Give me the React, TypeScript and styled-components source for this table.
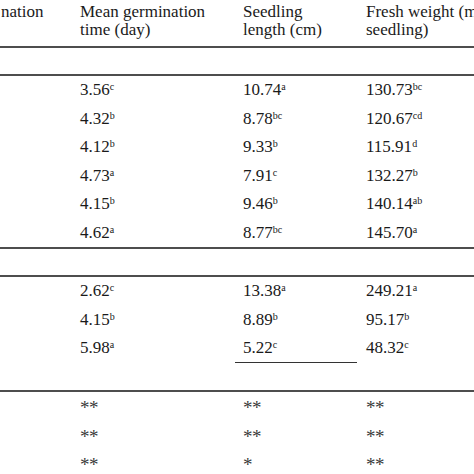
import styled, { createGlobalStyle } from 'styled-components';

const GlobalStyle = createGlobalStyle`
  html, body {
    margin: 0;
    padding: 0;
    background: #ffffff;
  }
  body {
    width: 474px;
    height: 474px;
    overflow: hidden;
    font-family: "Liberation Serif", "Times New Roman", serif;
    color: #1a1a1a;
  }
`;

const Table = styled.div`
  width: 474px;
  font-size: 17px;
  white-space: nowrap;
`;

const Grid = styled.div`
  display: grid;
  grid-template-columns: 72px 163px 122px 1fr;
`;

const Header = styled(Grid)`
  padding: 3px 0 7px;
  line-height: 18px;
  border-bottom: 2px solid #4d4d4d;
`;

const Blank = styled.div<{ $h: number }>`
  height: ${(p) => p.$h}px;
  border-bottom: 2px solid #4d4d4d;
`;

const Group = styled.div<{ $ruled?: boolean }>`
  border-bottom: ${(p) => (p.$ruled ? '2px solid #4d4d4d' : 'none')};
`;

const Row = styled(Grid)`
  height: 28.5px;
  line-height: 28.5px;
`;

const Cell = styled.div<{ $pad?: number; $under?: boolean }>`
  box-sizing: border-box;
  padding-left: ${(p) => p.$pad ?? 0}px;
  border-bottom: ${(p) => (p.$under ? '1px solid #333' : 'none')};
  overflow: hidden;
`;

const Sup = styled.span`
  font-size: 10px;
  vertical-align: 5.5px;
  line-height: 0;
`;

const Stars = styled.span`
  display: inline-block;
  font-size: 19px;
  letter-spacing: -0.5px;
  color: #3a3a3a;
  transform: translateY(2px);
`;

type Val = [string, string];

const pads = [0, 8, 8, 9];

const group1: Val[][] = [
  [['3.56', 'c'], ['10.74', 'a'], ['130.73', 'bc']],
  [['4.32', 'b'], ['8.78', 'bc'], ['120.67', 'cd']],
  [['4.12', 'b'], ['9.33', 'b'], ['115.91', 'd']],
  [['4.73', 'a'], ['7.91', 'c'], ['132.27', 'b']],
  [['4.15', 'b'], ['9.46', 'b'], ['140.14', 'ab']],
  [['4.62', 'a'], ['8.77', 'bc'], ['145.70', 'a']],
];

const group2: Val[][] = [
  [['2.62', 'c'], ['13.38', 'a'], ['249.21', 'a']],
  [['4.15', 'b'], ['8.89', 'b'], ['95.17', 'b']],
  [['5.98', 'a'], ['5.22', 'c'], ['48.32', 'c']],
];

const signif = [
  ['**', '**', '**'],
  ['**', '**', '**'],
  ['**', '*', '**'],
];

const DataRow = ({ vals, underMid }: { vals: Val[]; underMid?: boolean }) => (
  <Row>
    <Cell />
    {vals.map(([n, s], i) => (
      <Cell key={i} $pad={pads[i + 1]} $under={underMid && i === 1}>
        {n}
        <Sup>{s}</Sup>
      </Cell>
    ))}
  </Row>
);

const App = () => (
  <>
    <GlobalStyle />
    <Table>
      <Header>
        <Cell $pad={1}>
          nation
          <br />
          &nbsp;
        </Cell>
        <Cell $pad={8}>
          Mean germination
          <br />
          time (day)
        </Cell>
        <Cell $pad={8}>
          Seedling
          <br />
          length (cm)
        </Cell>
        <Cell $pad={9}>
          Fresh weight (mg/
          <br />
          seedling)
        </Cell>
      </Header>
      <Blank $h={26} />
      <Group $ruled>
        {group1.map((r, i) => (
          <DataRow key={i} vals={r} />
        ))}
      </Group>
      <Blank $h={26} />
      <Group>
        {group2.map((r, i) => (
          <DataRow key={i} vals={r} underMid={i === group2.length - 1} />
        ))}
      </Group>
      <Blank $h={27.5} />
      <Group>
        {signif.map((r, i) => (
          <Row key={i}>
            <Cell />
            {r.map((s, j) => (
              <Cell key={j} $pad={pads[j + 1]}>
                <Stars>{s}</Stars>
              </Cell>
            ))}
          </Row>
        ))}
      </Group>
    </Table>
  </>
);

export default App;
